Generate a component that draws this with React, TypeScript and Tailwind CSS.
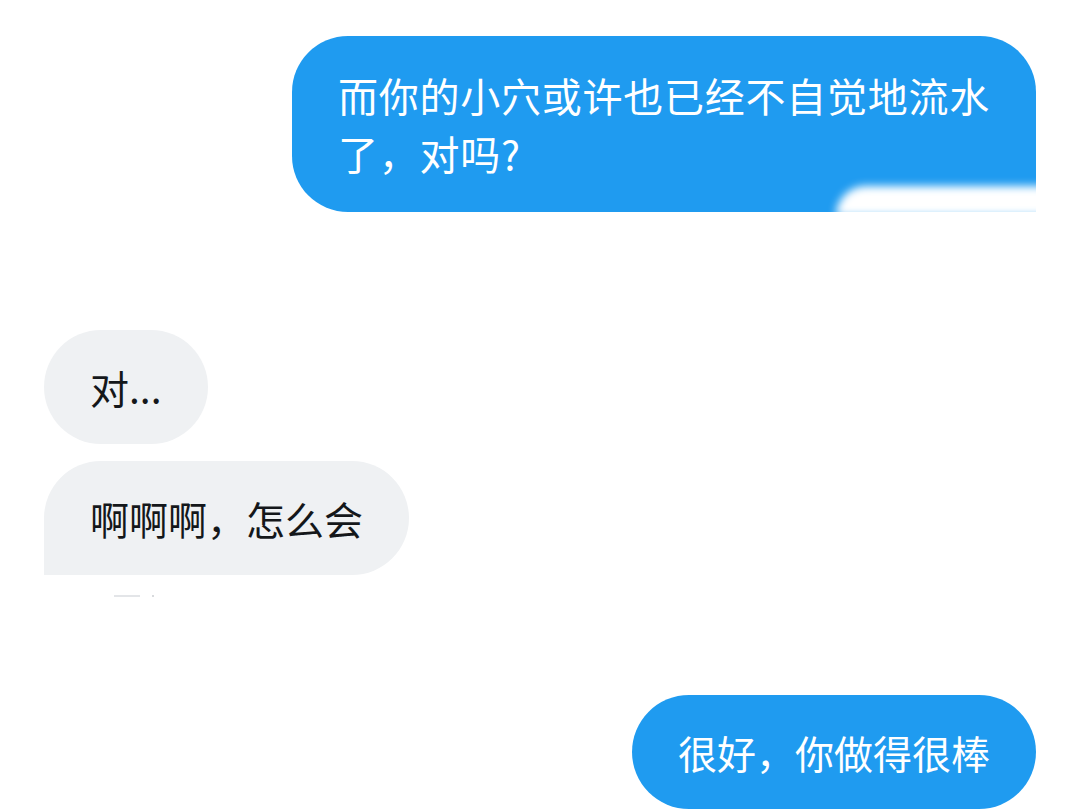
import React from 'react';

type Side = 'me' | 'them';

interface Message {
  id: number;
  side: Side;
  text: string;
  shape: string;
  gapTop: string;
}

const messages: Message[] = [
  {
    id: 1,
    side: 'me',
    text: '而你的小穴或许也已经不自觉地流水了，对吗?',
    shape: 'w-[744px] rounded-[56px] rounded-br-none py-[30px] text-[40px] tracking-[0.75px]',
    gapTop: 'mt-[36px]',
  },
  {
    id: 2,
    side: 'them',
    text: '对...',
    shape: 'rounded-full py-[28px] text-[39px]',
    gapTop: 'mt-[118px]',
  },
  {
    id: 3,
    side: 'them',
    text: '啊啊啊，怎么会',
    shape: 'rounded-[58px] rounded-bl-none py-[28px] text-[39px]',
    gapTop: 'mt-[17px]',
  },
  {
    id: 4,
    side: 'me',
    text: '很好，你做得很棒',
    shape: 'rounded-full py-[28px] text-[39px]',
    gapTop: 'mt-[118px]',
  },
];

function Bubble({ msg }: { msg: Message }) {
  const mine = msg.side === 'me';
  return (
    <div className={`flex ${mine ? 'justify-end' : 'justify-start'} ${msg.gapTop}`}>
      <div className="relative">
        <div
          className={`${msg.shape} px-[46px] leading-[58px] ${
            mine ? 'bg-[#1f9bf0] text-white' : 'bg-[#eff1f3] text-[#14171a]'
          }`}
        >
          {msg.text}
        </div>
        {msg.id === 1 && (
          // smeared corner under the first bubble
          <div className="absolute -right-[26px] -bottom-[4px] h-[30px] w-[226px] rounded-tl-[44px] bg-white blur-[4px]" />
        )}
      </div>
    </div>
  );
}

export default function App() {
  return (
    <div
      className="h-[809px] w-full overflow-hidden bg-white px-[44px]"
      style={{ fontFamily: '"Noto Sans CJK SC", "Noto Sans", sans-serif' }}
    >
      <div className="flex flex-col">
        {messages.slice(0, 3).map((m) => (
          <Bubble key={m.id} msg={m} />
        ))}
        <div className="mt-[20px] flex items-center gap-[12px] pl-[70px]">
          <div className="h-[2px] w-[26px] bg-[#e3e5e8]" />
          <div className="h-[2px] w-[2px] bg-[#d8dadd]" />
        </div>
        <div className="-mt-[20px]">
          <Bubble msg={messages[3]} />
        </div>
      </div>
    </div>
  );
}
